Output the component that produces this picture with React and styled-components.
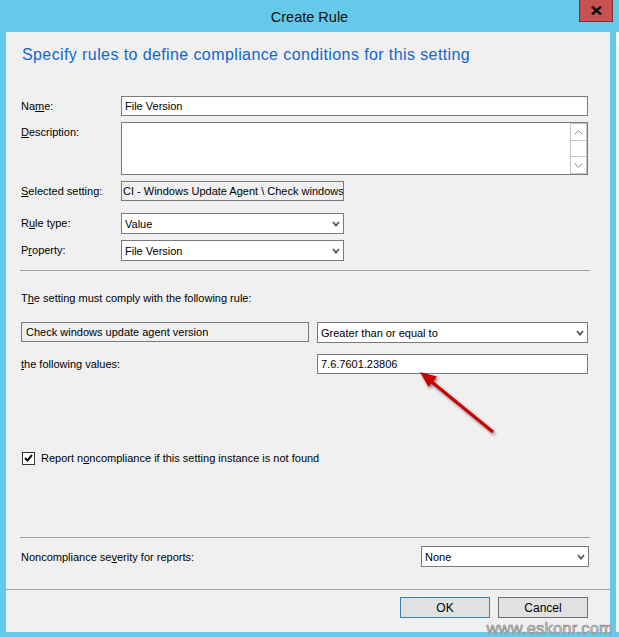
import React from "react";
import styled, { createGlobalStyle } from "styled-components";

const GlobalStyle = createGlobalStyle`
  html, body {
    margin: 0;
    padding: 0;
    background: #ffffff;
  }
  body {
    font-family: "Liberation Sans", Arial, sans-serif;
    font-size: 11px;
    color: #000;
  }
`;

const Window = styled.div`
  position: relative;
  width: 619px;
  height: 637px;
  background: #65c9ea;
  display: flex;
  flex-direction: column;
  overflow: hidden;
`;

const TitleBar = styled.div`
  position: relative;
  height: 32px;
  display: flex;
  justify-content: center;
  padding-top: 9px;
  box-sizing: border-box;
  font-size: 14.5px;
  color: #111;
`;

const CloseButton = styled.div`
  position: absolute;
  top: 0;
  right: 6px;
  width: 34px;
  height: 22px;
  box-sizing: border-box;
  background: #c75050;
  border: 1px solid #7a3030;
  border-top: none;
  display: flex;
  align-items: center;
  justify-content: center;
`;

const EdgeStrip = styled.div`
  width: 3px;
  background: #f4f4f4;
  border-top: 14px solid #fff;
`;

const Body = styled.div`
  display: flex;
  flex: 1;
  padding-left: 6px;
  padding-bottom: 5px;
`;

const Client = styled.div`
  position: relative;
  width: 604px;
  background: #f0f0f0;
  display: flex;
  flex-direction: column;
  margin-right: 6px;
`;

const Heading = styled.div`
  margin: 12px 0 0 16px;
  font-size: 16px;
  letter-spacing: 0.4px;
  line-height: 22px;
  color: #1366cc;
`;

const Form = styled.div`
  display: flex;
  flex-direction: column;
  padding: 0 22px 0 15px;
`;

const Row = styled.div`
  display: flex;
  align-items: flex-start;
  margin-top: ${(p) => p.$gap || 0}px;
`;

const Label = styled.div`
  width: 100px;
  flex-shrink: 0;
  line-height: 20px;
  white-space: nowrap;
`;

const Key = styled.span`
  text-decoration: underline;
  text-underline-offset: 1px;
`;

const TextBox = styled.div`
  box-sizing: border-box;
  height: ${(p) => p.$h || 20}px;
  width: ${(p) => (p.$w ? `${p.$w}px` : "auto")};
  flex: ${(p) => (p.$w ? "none" : 1)};
  border: 1px solid #7a7a7a;
  background: ${(p) => (p.$readonly ? "#f0f0f0" : "#fff")};
  padding: 0 ${(p) => (p.$readonly ? 1 : 3)}px;
  line-height: 18px;
  white-space: nowrap;
  overflow: hidden;
  position: relative;
`;

const Scroll = styled.div`
  position: absolute;
  top: 0;
  right: 0;
  width: 17px;
  height: 100%;
  box-sizing: border-box;
  border: 1px solid #c6c6c6;
  background: #fff;
  display: flex;
  flex-direction: column;
  justify-content: space-between;
`;

const ScrollBtn = styled.div`
  height: 16px;
  display: flex;
  align-items: center;
  justify-content: center;
  border-${(p) => (p.$down ? "top" : "bottom")}: 1px solid #c6c6c6;
`;

const Select = styled.div`
  box-sizing: border-box;
  height: 21px;
  width: ${(p) => (p.$w ? `${p.$w}px` : "auto")};
  flex: ${(p) => (p.$w ? "none" : 1)};
  border: 1px solid #7a7a7a;
  background: #fff;
  padding: 0 3px;
  display: flex;
  align-items: center;
  justify-content: space-between;
  white-space: nowrap;
`;

const Separator = styled.div`
  height: 1px;
  background: #a0a0a0;
  margin: ${(p) => p.$top || 0}px ${(p) => (p.$full ? 0 : 20)}px 0
    ${(p) => (p.$full ? 0 : 14)}px;
`;

const Text = styled.div`
  padding-left: 15px;
  line-height: 20px;
  margin-top: ${(p) => p.$gap || 0}px;
`;

const RuleGrid = styled.div`
  display: grid;
  grid-template-columns: 288px 1fr;
  column-gap: 8px;
  align-items: start;
  margin-top: ${(p) => p.$gap || 0}px;
`;

const CheckRow = styled.div`
  display: flex;
  align-items: center;
  gap: 6px;
  padding-left: 16px;
  margin-top: ${(p) => p.$gap || 0}px;
  line-height: 14px;
`;

const CheckBox = styled.div`
  width: 13px;
  height: 13px;
  box-sizing: border-box;
  border: 1px solid #333;
  background: #fff;
  display: flex;
  align-items: center;
  justify-content: center;
`;

const SeverityRow = styled.div`
  display: flex;
  align-items: center;
  justify-content: space-between;
  padding: 0 21px 0 15px;
  margin-top: 8px;
`;

const Buttons = styled.div`
  display: flex;
  justify-content: flex-end;
  gap: 8px;
  padding-right: 22px;
  margin-top: 7px;
`;

const Button = styled.div`
  width: 90px;
  height: 21px;
  box-sizing: border-box;
  border: 1px solid ${(p) => (p.$primary ? "#3c7fb1" : "#707070")};
  background: #e1e1e1;
  display: flex;
  align-items: center;
  justify-content: center;
  font-size: 12px;
`;

const ArrowLayer = styled.svg`
  position: absolute;
  left: 400px;
  top: 330px;
  overflow: visible;
`;

const Watermark = styled.div`
  position: absolute;
  right: 6px;
  bottom: 0;
  font-size: 16.5px;
  line-height: 18px;
  color: #d0d0d0;
  -webkit-text-stroke: 0.7px #8c8c8c;
  letter-spacing: 0.2px;
`;

const Chevron = () => (
  <svg width="8" height="6" viewBox="0 0 8 6">
    <polyline points="1,1 4,4.5 7,1" fill="none" stroke="#555" strokeWidth="1.8" />
  </svg>
);

const SmallChevron = ({ up }) => (
  <svg width="9" height="5" viewBox="0 0 9 5">
    <polyline
      points={up ? "0.5,4.5 4.5,0.8 8.5,4.5" : "0.5,0.5 4.5,4.2 8.5,0.5"}
      fill="none"
      stroke="#8a8a8a"
      strokeWidth="1"
    />
  </svg>
);

export default function App() {
  return (
    <>
      <GlobalStyle />
      <Window>
        <TitleBar>
          Create Rule
          <CloseButton>
            <svg width="11" height="9" viewBox="0 0 11 9">
              <path d="M1 0.5 L10 8.5 M10 0.5 L1 8.5" stroke="#111" strokeWidth="2.4" />
            </svg>
          </CloseButton>
        </TitleBar>
        <Body>
          <Client>
            <Heading>Specify rules to define compliance conditions for this setting</Heading>

            <Form>
              <Row $gap={30}>
                <Label>
                  Na<Key>m</Key>e:
                </Label>
                <TextBox>File Version</TextBox>
              </Row>
              <Row $gap={6}>
                <Label>
                  <Key>D</Key>escription:
                </Label>
                <TextBox $h={53}>
                  <Scroll>
                    <ScrollBtn>
                      <SmallChevron up />
                    </ScrollBtn>
                    <ScrollBtn $down>
                      <SmallChevron />
                    </ScrollBtn>
                  </Scroll>
                </TextBox>
              </Row>
              <Row $gap={6}>
                <Label>
                  <Key>S</Key>elected setting:
                </Label>
                <TextBox $w={223} $readonly>
                  CI - Windows Update Agent \ Check windows
                </TextBox>
              </Row>
              <Row $gap={12}>
                <Label>
                  R<Key>u</Key>le type:
                </Label>
                <Select $w={223}>
                  Value
                  <Chevron />
                </Select>
              </Row>
              <Row $gap={6}>
                <Label>
                  P<Key>r</Key>operty:
                </Label>
                <Select $w={223}>
                  File Version
                  <Chevron />
                </Select>
              </Row>
            </Form>

            <Separator $top={9} />

            <Text $gap={17}>
              T<Key>h</Key>e setting must comply with the following rule:
            </Text>

            <Form>
              <RuleGrid $gap={14}>
                <TextBox $readonly $h={20}>
                  &nbsp;Check windows update agent version
                </TextBox>
                <Select>
                  Greater than or equal to
                  <Chevron />
                </Select>
              </RuleGrid>
              <RuleGrid $gap={11}>
                <Label>
                  <Key>t</Key>he following values:
                </Label>
                <TextBox>7.6.7601.23806</TextBox>
              </RuleGrid>
            </Form>

            <CheckRow $gap={77}>
              <CheckBox>
                <svg width="9" height="8" viewBox="0 0 9 8">
                  <polyline points="1,4 3.5,6.5 8,1" fill="none" stroke="#111" strokeWidth="2" />
                </svg>
              </CheckBox>
              <span>
                Report n<Key>o</Key>ncompliance if this setting instance is not found
              </span>
            </CheckRow>

            <Separator $top={72} />

            <SeverityRow>
              <span>
                Noncompliance se<Key>v</Key>erity for reports:
              </span>
              <Select $w={168}>
                None
                <Chevron />
              </Select>
            </SeverityRow>

            <Separator $top={22} $full />

            <Buttons>
              <Button $primary>OK</Button>
              <Button>Cancel</Button>
            </Buttons>

            <ArrowLayer width="100" height="80" viewBox="0 0 100 80">
              <defs>
                <filter id="sh" x="-30%" y="-30%" width="160%" height="160%">
                  <feDropShadow dx="1.5" dy="2" stdDeviation="1.5" floodColor="#000" floodOpacity="0.45" />
                </filter>
              </defs>
              <g filter="url(#sh)">
                <line x1="87" y1="70" x2="24" y2="18.5" stroke="#c80000" strokeWidth="3" />
                <polygon points="14,10 31,14.5 22.5,25" fill="#c80000" />
              </g>
            </ArrowLayer>
          </Client>
          <EdgeStrip />
        </Body>
        <Watermark>www.eskonr.com</Watermark>
      </Window>
    </>
  );
}
